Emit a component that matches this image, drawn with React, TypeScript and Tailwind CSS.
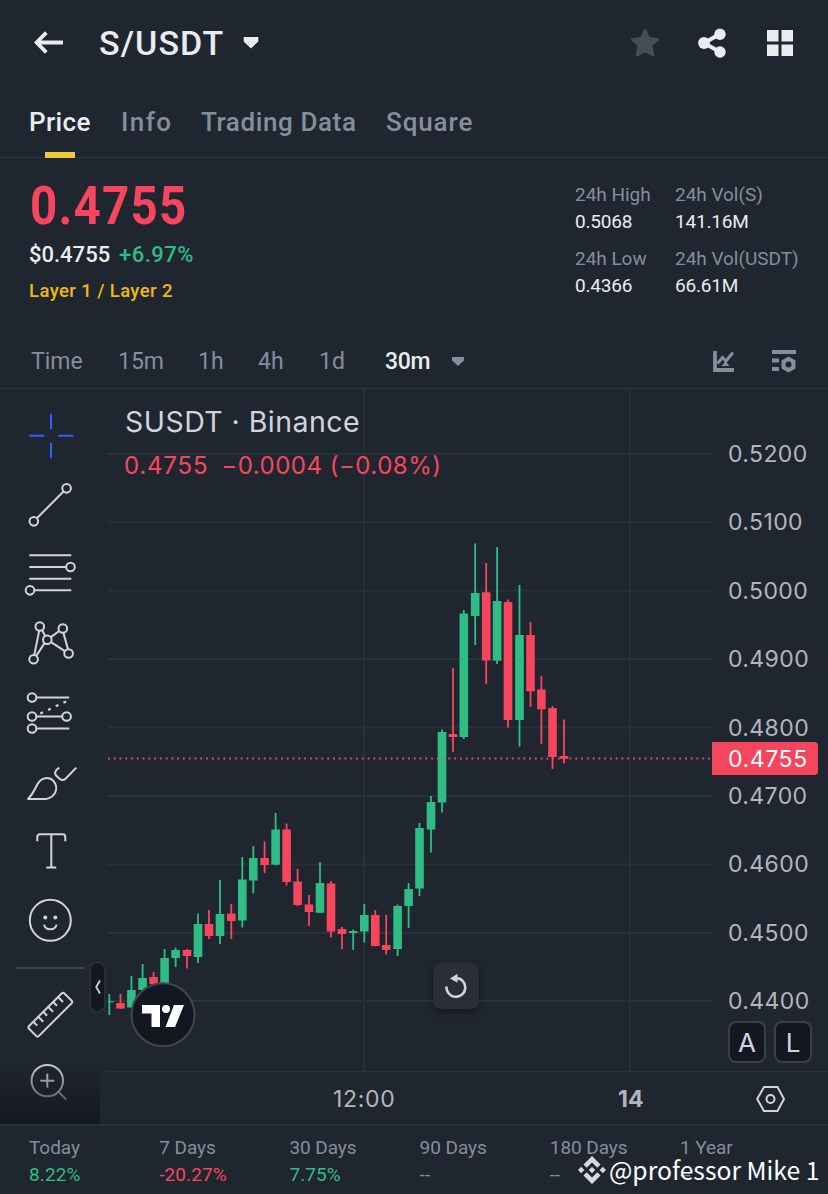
import type { ReactNode } from 'react'

const UP = '#2ebd85'
const DOWN = '#f6465d'

// x, high, body top, body bottom, low, rising
type Candle = [number, number, number, number, number, boolean]

const candles: Candle[] = [
  [109.3, 994, 1001, 1002.3, 1015, true],
  [120.5, 994, 1003, 1008.5, 1009, false],
  [131.4, 976, 990, 1007.5, 1008, true],
  [142.6, 964, 978, 990, 991, true],
  [153.6, 972, 977, 984, 986, false],
  [164.6, 949, 958, 984, 986, true],
  [175.6, 947.5, 950, 958, 967, true],
  [187, 949, 950, 956, 968.5, false],
  [198, 913.5, 924, 957, 963, true],
  [209, 910, 924, 936, 939, false],
  [220, 880, 914, 936, 944, true],
  [231.3, 904, 913.5, 921, 939, false],
  [242.3, 857, 879.5, 920.5, 927.5, true],
  [253.3, 846, 858, 880.5, 893.5, true],
  [264.6, 841.5, 858, 865, 873, false],
  [275.6, 813, 829.5, 864.7, 865.5, true],
  [286.6, 823.5, 829.5, 882, 885.5, false],
  [297.6, 869, 881.5, 905, 906, false],
  [309, 895, 904.5, 912, 926, false],
  [320, 862, 883, 912.8, 913, true],
  [331, 881, 883.5, 931.5, 937.5, false],
  [342, 927, 929, 934, 949, false],
  [353.2, 929.5, 931, 933, 950, true],
  [364.3, 904, 915, 931.5, 942.5, true],
  [375.3, 910, 915, 946, 946.3, false],
  [386.2, 915, 945, 950, 954.5, false],
  [397.6, 904.5, 906, 949, 956, true],
  [408.6, 883, 889, 906, 928, true],
  [419.5, 823, 828, 888.5, 896, true],
  [431, 796, 802, 829.5, 852.5, true],
  [442, 729.5, 732, 802.5, 812.5, true],
  [453, 668, 734, 737, 752, false],
  [463.8, 610, 613.5, 737, 739, true],
  [475.2, 543.5, 593, 616, 645, true],
  [486.2, 563, 592.3, 660.5, 684, false],
  [497.1, 547, 601, 660.7, 664, true],
  [508, 599.5, 602, 720, 727.5, false],
  [519.5, 585, 635, 720, 746.5, true],
  [530.5, 622, 635, 691.3, 707, false],
  [541.4, 676, 689.5, 709.3, 744, false],
  [552.5, 706, 708, 757, 769, false],
  [564, 719.5, 756, 758.8, 763.5, false],
]

const gridY = [454, 522.3, 590.7, 659, 727.5, 796, 864.3, 933, 1001]
const priceLabels = ['0.5200', '0.5100', '0.5000', '0.4900', '0.4800', '0.4700', '0.4600', '0.4500', '0.4400']

const stats = [
  { label: 'Today', value: '8.22%', color: 'text-[#2ebd85]' },
  { label: '7 Days', value: '-20.27%', color: 'text-[#f6465d]' },
  { label: '30 Days', value: '7.75%', color: 'text-[#2ebd85]' },
  { label: '90 Days', value: '--', color: 'text-[#848e9c]' },
  { label: '180 Days', value: '--', color: 'text-[#848e9c]' },
  { label: '1 Year', value: '--', color: 'text-[#848e9c]' },
]

function Tool({ children, color = '#d1d4dc' }: { children: ReactNode; color?: string }) {
  return (
    <svg
      className="block h-[69.3px] w-[100px] shrink-0"
      viewBox="-50.3 -34.65 100 69.3"
      fill="none"
      stroke={color}
      strokeWidth="2"
    >
      {children}
    </svg>
  )
}

function Header() {
  return (
    <header className="flex h-[85px] items-center pl-[34px] pr-[35px] text-[#eaecef]">
      <svg className="block h-6 w-[30px]" viewBox="0 0 30 24" fill="none" stroke="currentColor" strokeWidth="3.8">
        <path d="M29 11.5H3M12.3 1.6 2.6 11.5l9.7 9.8" />
      </svg>
      <h1 className="ml-[35px] w-[128px] whitespace-nowrap pt-px text-[34px] font-medium leading-[44px] tracking-[1.1px]">S/USDT</h1>
      <svg className="ml-4 block h-3 w-4" viewBox="0 0 16 12" fill="currentColor">
        <path d="M.7 0h14.600v4.500L8 11.500.7 4.500z" />
      </svg>
      <div className="ml-auto flex items-center">
        <svg className="block h-[30px] w-[30px]" viewBox="0 0 30 30" fill="#474d57" stroke="#474d57" strokeWidth="3" strokeLinejoin="round">
          <path d="m15 2.500 3.600 8 8.900.9-6.700 6 2 9.600-7.800-4.500L7.200 27l2-9.600-6.700-6 8.900-.9z" />
        </svg>
        <svg className="ml-[38px] block h-[30px] w-[28px]" viewBox="0 0 28 30" fill="currentColor">
          <path d="M22 6 6 15l16 9" fill="none" stroke="currentColor" strokeWidth="4" />
          <circle cx="22" cy="6.200" r="5.700" />
          <circle cx="6" cy="15" r="5.900" />
          <circle cx="22" cy="24" r="5.700" />
        </svg>
        <svg className="ml-[41px] block h-[26px] w-[26px]" viewBox="0 0 26 26" fill="currentColor">
          <path d="M0 0h11.500v11.500H0zM14.500 0H26v11.500H14.500zM0 14.500h11.500V26H0zM14.500 14.500H26V26H14.500z" />
        </svg>
      </div>
    </header>
  )
}

function Tabs() {
  return (
    <nav className="flex h-[73px] gap-[30px] border-b border-[#2e343e] pl-[29px] pt-[19px] text-[26px] font-medium leading-9 text-[#848e9c]">
      <div className="relative w-[62px] whitespace-nowrap tracking-[0.4px] text-[#eaecef]">
        Price
        <span className="absolute left-4 top-[48px] h-1.5 w-[30px] bg-[#f0c93b]" />
      </div>
      <div className="w-[50px] whitespace-nowrap tracking-[1.4px]">Info</div>
      <div className="w-[155px] whitespace-nowrap tracking-[0.6px]">Trading Data</div>
      <div className="whitespace-nowrap tracking-[0.9px]">Square</div>
    </nav>
  )
}

function Figure({ label, value }: { label: string; value: string }) {
  return (
    <div className="h-[63.500px] whitespace-nowrap">
      <div className="text-[19px] leading-[26px] tracking-[-0.03px] text-[#848e9c]">{label}</div>
      <div className="text-[19px] leading-7 tracking-[-0.2px] text-[#eaecef]">{value}</div>
    </div>
  )
}

function Summary() {
  return (
    <section className="flex h-[177px]">
      <div className="w-[575px] pl-[29px] pt-[17px]">
        <div className="h-[62px] origin-left translate-x-px scale-x-[0.88] whitespace-nowrap text-[54px] font-bold leading-[62px] tracking-[1.4px] text-[#f6465d]">0.4755</div>
        <div className="flex h-[36px] gap-2 text-[22px] font-medium leading-[36px] text-[#eaecef]">
          <span className="w-[82px]">$0.4755</span>
          <span className="tracking-[0.5px] text-[#2ebd85]">+6.97%</span>
        </div>
        <div className="mt-1 text-[18.5px] font-medium leading-[28px] tracking-[0.4px] text-[#f0b90b]">Layer 1 / Layer 2</div>
      </div>
      <div className="w-[100px] pt-6">
        <Figure label="24h High" value="0.5068" />
        <Figure label="24h Low" value="0.4366" />
      </div>
      <div className="pt-6">
        <Figure label="24h Vol(S)" value="141.16M" />
        <Figure label="24h Vol(USDT)" value="66.61M" />
      </div>
    </section>
  )
}

function Intervals() {
  return (
    <div className="flex h-[54px] items-center whitespace-nowrap border-b border-[#2e343e] pl-[31px] pr-8 text-[23px] leading-[30px] text-[#848e9c]">
      <span className="w-[87px]">Time</span>
      <span className="w-[80px]">15m</span>
      <span className="w-[60px]">1h</span>
      <span className="w-[61px]">4h</span>
      <span className="w-[66px]">1d</span>
      <span className="w-[67px] font-medium tracking-[-0.3px] text-[#eaecef]">30m</span>
      <svg className="block h-[9px] w-3" viewBox="0 0 12 9" fill="currentColor">
        <path d="M0 0h12v3.500L6 9 0 3.500z" />
      </svg>
      <svg className="ml-auto block h-[22px] w-[22px]" viewBox="0 0 22 22" fill="none" stroke="currentColor">
        <path d="M2 0v19h19" strokeWidth="3.800" />
        <path d="m4.500 12.500 5-6 3.500 3.500 7-8.500" strokeWidth="3" />
        <path d="m12.500 10 4 5h-8z" fill="currentColor" stroke="none" />
      </svg>
      <svg className="ml-[37px] block h-[23px] w-6" viewBox="0 0 24 23" fill="currentColor">
        <path d="M0 0h24v4H0zM0 8.500h7v4H0zM0 17h7v4H0z" />
        <path fillRule="evenodd" d="m16.500 6.500 7 4v8l-7 4-7-4v-8zm0 5a3 3 0 1 0 0 6 3 3 0 0 0 0-6z" />
      </svg>
    </div>
  )
}

function Toolbar() {
  return (
    <aside className="relative flex h-[735px] w-[100px] shrink-0 flex-col pt-[12.3px]">
      <Tool color="#2962ff">
        <path d="M.7-22v15.500M.7 7v15.500M-21 0h15M8 0h15" />
      </Tool>
      <Tool>
        <path d="M13.200-14.200-13.400 12.600" />
        <circle cx="16.300" cy="-17.300" r="4.300" />
        <circle cx="-16.500" cy="15.700" r="4.300" />
      </Tool>
      <Tool>
        <path d="M-21-19.300h42M-21-7.600h37M-21 4.100h42M-16 15.700h37" />
        <circle cx="20.200" cy="-7.600" r="4.300" />
        <circle cx="-20.300" cy="15.700" r="4.300" />
      </Tool>
      <Tool>
        <path d="M-11.100-13-16 11.400M-8.200-13.600l3 6M-14 12.200-5.800-.5M.6-6.500l8.300-6.200M13-11l4.700 16.500M.8-1.600 14.500 7.500" />
        <circle cx="-10.500" cy="-17.200" r="4.300" />
        <circle cx="12.500" cy="-15.200" r="4.300" />
        <circle cx="-3" cy="-3.900" r="4.300" />
        <circle cx="-16.700" cy="15.600" r="4.300" />
        <circle cx="18.300" cy="9.800" r="4.300" />
      </Tool>
      <Tool>
        <path d="M-14-15.200h33M-14 3.800h26M-14 15.800h33" />
        <path d="M-10 .8 16-11.200" strokeWidth="2.200" strokeDasharray="3 5.500" />
        <circle cx="-18.300" cy="-15.200" r="4.300" />
        <circle cx="-18.300" cy="3.800" r="4.300" />
        <circle cx="16.300" cy="3.800" r="4.300" />
        <circle cx="-18.300" cy="15.800" r="4.300" />
      </Tool>
      <Tool>
        <path d="M-22.300 16.300C-16 10-15 5-12.500 1-9-5-1-6.500 3.300-1.500 9 5.500 5 15-4.500 16.300z" strokeLinejoin="round" />
        <path d="M9-15C4-12 3.500-9 7-6c3.500 4 6 4.200 8.500 1.800L26-15" />
      </Tool>
      <Tool>
        <path d="M-13-10.500v-4c0-2 .8-2.800 2.500-2.800h23c1.700 0 2.500.8 2.500 2.800v4M1-17v33M-4 15.900H6" />
      </Tool>
      <Tool>
        <circle cx="0" cy="-.3" r="20.500" />
        <circle cx="-5" cy="-3.200" r="2" fill="#d1d4dc" stroke="none" />
        <circle cx="5" cy="-3.200" r="2" fill="#d1d4dc" stroke="none" />
        <path d="M-6.200 4c1 6.200 11.400 6.200 12.400 0" />
      </Tool>
      <div className="ml-4 mt-[11px] h-0.5 w-[69px] shrink-0 bg-[#3e434e]" />
      <div className="mt-[11.300px]">
        <Tool>
          <g transform="rotate(-45)">
            <rect x="-25" y="-7" width="50" height="14" rx="2" />
            <path d="M-17-7v5.500M-10-7v7M-3-7v5.500M4-7v7M11-7v5.500M18-7v7" />
          </g>
        </Tool>
      </div>
      <Tool>
        <circle cx="-3" cy="-3" r="15.700" />
        <path d="M-10-3H4M-3-10V4M8.200 8.200 16 16" />
      </Tool>
      <div className="absolute bottom-0 left-0 h-[62px] w-[100px] bg-gradient-to-b from-[#131722]/0 to-[#131722]" />
    </aside>
  )
}

function ChartPane() {
  return (
    <svg className="block h-[683px] w-[612px] shrink-0" viewBox="100 389 612 683">
      <g stroke="#2b313b" strokeWidth="1.800">
        {gridY.map(y => (
          <path key={y} d={`M108 ${y}H712`} />
        ))}
        <path d="M364.200 389V1071M630 389V1071" />
      </g>
      <path d="M105 1071.500H712" stroke="#2d333d" strokeWidth="1.500" />
      {candles.map(([x, high, top, bottom, low, up]) => (
        <g key={x} fill={up ? UP : DOWN}>
          <rect x={x - 0.9} y={high} width="1.8" height={low - high} />
          <rect x={Math.max(x - 4.3, 108)} y={top} width={x < 112 ? 5.6 : 8.6} height={bottom - top} />
        </g>
      ))}
      <path d="M108 758.500H712" stroke={DOWN} strokeWidth="1.800" strokeDasharray="1.800 3.970" />
    </svg>
  )
}

function Chart() {
  return (
    <div className="relative w-[728px]">
      <div className="flex h-[683px]">
        <ChartPane />
        <div className="relative w-[116px] border-b border-[#2d333d] pt-[31px]">
          {priceLabels.map(p => (
            <div key={p} className="h-[68.400px] pl-4 text-[23px] leading-[68.400px] tracking-[0.4px] text-[#b2b5be]">{p}</div>
          ))}
          <div className="absolute left-0 top-[353px] h-[33px] w-[106px] rounded-r bg-[#f6465d] pl-4 text-[23px] leading-[34px] tracking-[0.6px] text-white">0.4755</div>
          <div className="absolute left-4 top-[632px] flex gap-2 text-[26px] text-[#d1d4dc]">
            <span className="flex h-[42px] w-[38px] items-center justify-center rounded-lg border-2 border-[#3a3f4a] bg-[#131722]">A</span>
            <span className="flex h-[42px] w-[38px] items-center justify-center rounded-lg border-2 border-[#3a3f4a] bg-[#131722]">L</span>
          </div>
        </div>
      </div>
      <div className="flex h-[53px] items-center pt-px text-[23px] leading-8 text-[#b2b5be]">
        <span className="w-[528px] pl-[233px] tracking-[0.7px]">12:00</span>
        <div className="-ml-3 w-[140px] pl-0.5 font-bold">14</div>
        <svg className="block h-[26px] w-[30px]" viewBox="0 0 30 26" fill="none" stroke="#d1d4dc" strokeWidth="2">
          <path d="M8 1h13.500L28 13l-6.500 12H8L1.200 13z" />
          <circle cx="14.500" cy="13" r="4" />
        </svg>
      </div>

      {/* legend */}
      <div className="absolute left-[25px] top-[15px] whitespace-nowrap">
        <div className="text-[28.500px] leading-9 tracking-[0.450px] text-[#d1d4dc]">SUSDT · Binance</div>
        <div className="-ml-px mt-[10px] flex gap-[13px] text-[24px] leading-8 tracking-[0.500px] text-[#f6465d]">
          <span className="tracking-[0.800px]">0.4755</span>
          <span>−0.0004 (−0.08%)</span>
        </div>
      </div>

      {/* toolbar collapse handle */}
      <div className="absolute -left-[11px] top-[572px] flex h-[52px] w-[17px] items-center justify-center rounded-full border-2 border-[#2a2e39] bg-[#131722]">
        <svg className="block h-[14px] w-[6px]" viewBox="0 0 6 14" fill="none" stroke="#d1d4dc" strokeWidth="1.800">
          <path d="M5 .5 1.200 7 5 13.500" />
        </svg>
      </div>

      <svg className="absolute left-[30px] top-[592px] block h-[67px] w-[66px]" viewBox="130 981 66 67">
        <circle cx="163" cy="1014.700" r="31.500" fill="#131722" stroke="#434651" strokeWidth="2" />
        <g fill="#fff">
          <path d="M142 1005h18v22h-8.500v-13.500H142zM174 1005h10l-9 22h-9.500z" />
          <circle cx="166" cy="1009" r="4" />
        </g>
      </svg>

      <div className="absolute left-[333px] top-[574px] flex h-[46px] w-[46px] items-center justify-center rounded-lg bg-[#2a2e39] shadow-[0_3px_6px_rgba(0,0,0,0.4)]">
        <svg className="block h-6 w-6" viewBox="-.5 0 24 24" fill="none" stroke="#d1d4dc" strokeWidth="2.600">
          <path d="M2 12.500a9.400 9.400 0 1 0 9.400-8.500" />
          <path d="M5.500 4.500 13-.2v9z" fill="#d1d4dc" stroke="none" />
        </svg>
      </div>
    </div>
  )
}

function Watermark() {
  return (
    <div className="absolute bottom-[6px] left-[578px] flex items-center whitespace-nowrap font-['Noto_Sans_CJK_SC',sans-serif] text-white">
      <svg className="block h-7 w-7" viewBox="0 0 28 28" fill="#d9d9d9">
        <path d="m14 0 8.500 8.500-3.200 3.200L14 6.400l-5.300 5.300-3.200-3.200zM14 28l-8.500-8.500 3.200-3.200 5.300 5.300 5.300-5.300 3.200 3.200zM3.200 10.800 6.400 14l-3.200 3.200L0 14zM24.800 10.800 28 14l-3.200 3.200-3.200-3.200zM14 10.800l3.200 3.200-3.200 3.200-3.200-3.200z" />
      </svg>
      <span className="relative -top-px ml-[3px] text-[24.700px] leading-9">@professor Mike 1</span>
    </div>
  )
}

export default function App() {
  return (
    <div className="relative h-[1194px] w-[828px] overflow-hidden bg-[#202630] font-['Roboto',sans-serif]">
      <Header />
      <Tabs />
      <Summary />
      <Intervals />
      <div className="flex h-[737px] border-b-2 border-[#292f39] font-['Inter',sans-serif]">
        <Toolbar />
        <Chart />
      </div>
      <div className="flex whitespace-nowrap pl-[29px] pt-[9px] text-[19px]">
        {stats.map(s => (
          <div key={s.label} className="w-[130.200px] shrink-0">
            <div className="leading-[26px] tracking-[-0.05px] text-[#848e9c]">{s.label}</div>
            <div className={`leading-7 tracking-[0.1px] ${s.color}`}>{s.value}</div>
          </div>
        ))}
      </div>
      <Watermark />
    </div>
  )
}
